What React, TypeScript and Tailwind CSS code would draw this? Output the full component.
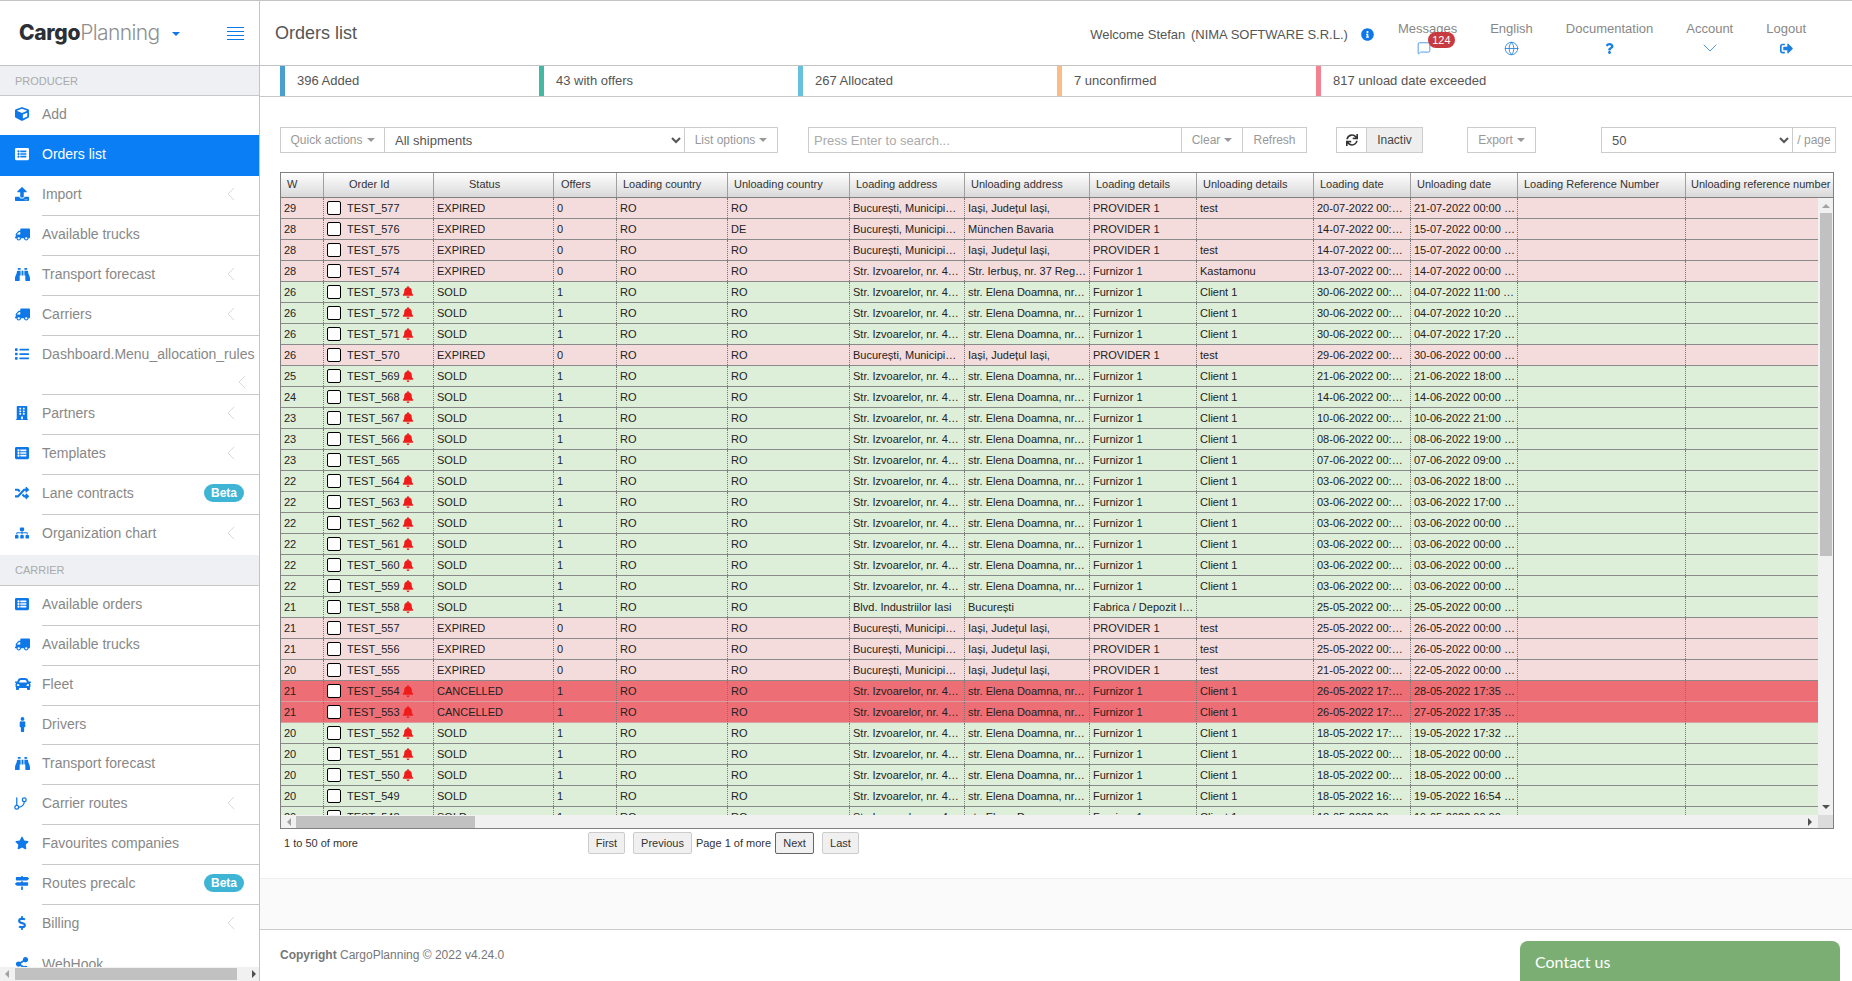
import React from 'react';
import { ChevronDown, ChevronLeft, GitBranch, Globe, MessageSquare } from 'lucide-react';
import {
    FaBell, FaBinoculars, FaBuilding, FaCar, FaCube, FaDollarSign, FaInfoCircle, FaList, FaListAlt,
    FaMale, FaMapSigns, FaQuestion, FaRandom, FaShareAlt, FaSignOutAlt, FaSitemap, FaStar, FaSync, FaTruck, FaUpload,
} from 'react-icons/fa';

const truck = <FaTruck size={15} className="-scale-x-100" />;
const binoculars = <FaBinoculars size={15} />;
const listAlt = <FaListAlt size={14} />;

type MenuItem = { label: string; icon: React.ReactNode; arrow?: boolean; beta?: boolean; active?: boolean; wrap?: boolean; noLine?: boolean; h: string };

const producer: MenuItem[] = [
    { label: 'Add', icon: <FaCube size={14} />, noLine: true, h: 'h-[39px]' },
    { label: 'Orders list', icon: listAlt, active: true, noLine: true, h: 'h-[41px]' },
    { label: 'Import', icon: <FaUpload size={14} />, arrow: true, h: 'h-[40px]' },
    { label: 'Available trucks', icon: truck, h: 'h-[40px]' },
    { label: 'Transport forecast', icon: binoculars, arrow: true, h: 'h-[40px]' },
    { label: 'Carriers', icon: truck, arrow: true, h: 'h-[40px]' },
    { label: 'Dashboard.Menu_allocation_rules', icon: <FaList size={14} />, wrap: true, h: 'h-[59px]' },
    { label: 'Partners', icon: <FaBuilding size={14} />, arrow: true, h: 'h-[40px]' },
    { label: 'Templates', icon: listAlt, arrow: true, h: 'h-[40px]' },
    { label: 'Lane contracts', icon: <FaRandom size={14} />, beta: true, h: 'h-[40px]' },
    { label: 'Organization chart', icon: <FaSitemap size={14} />, arrow: true, noLine: true, h: 'h-[40px]' },
];

const carrier: MenuItem[] = [
    { label: 'Available orders', icon: listAlt, h: 'h-[40px]' },
    { label: 'Available trucks', icon: truck, h: 'h-[40px]' },
    { label: 'Fleet', icon: <FaCar size={16} />, h: 'h-[40px]' },
    { label: 'Drivers', icon: <FaMale size={15} />, h: 'h-[39px]' },
    { label: 'Transport forecast', icon: binoculars, h: 'h-[40px]' },
    { label: 'Carrier routes', icon: <GitBranch size={15} strokeWidth={2} className="-ml-[2px]" />, arrow: true, h: 'h-[40px]' },
    { label: 'Favourites companies', icon: <FaStar size={14} />, h: 'h-[40px]' },
    { label: 'Routes precalc', icon: <FaMapSigns size={14} />, beta: true, h: 'h-[40px]' },
    { label: 'Billing', icon: <FaDollarSign size={14} />, arrow: true, noLine: true, h: 'h-[41px]' },
    { label: 'WebHook', icon: <FaShareAlt size={14} />, noLine: true, h: 'h-[40px]' },
];

const columns = [
    { title: 'W', w: 'w-[43px]', pad: 'pl-[6px]' },
    { title: 'Order Id', w: 'w-[110px]', pad: 'pl-[25px]' },
    { title: 'Status', w: 'w-[120px]', pad: 'pl-[35px]' },
    { title: 'Offers', w: 'w-[63px]', pad: 'pl-[7px]' },
    { title: 'Loading country', w: 'w-[111px]', pad: 'pl-[6px]' },
    { title: 'Unloading country', w: 'w-[122px]', pad: 'pl-[6px]' },
    { title: 'Loading address', w: 'w-[115px]', pad: 'pl-[6px]' },
    { title: 'Unloading address', w: 'w-[125px]', pad: 'pl-[6px]' },
    { title: 'Loading details', w: 'w-[107px]', pad: 'pl-[6px]' },
    { title: 'Unloading details', w: 'w-[117px]', pad: 'pl-[6px]' },
    { title: 'Loading date', w: 'w-[97px]', pad: 'pl-[6px]' },
    { title: 'Unloading date', w: 'w-[107px]', pad: 'pl-[6px]' },
    { title: 'Loading Reference Number', w: 'w-[168px]', pad: 'pl-[6px]' },
];

const BUC = 'București, Municipiul București';
const IZV = 'Str. Izvoarelor, nr. 4A Iași';
const IASI = 'Iași, Județul Iași,';
const ELENA = 'str. Elena Doamna, nr. 20, Iași';

// w, id, bell, status, unloading country, addresses, details, dates
type Row = [number, number, boolean, string, string, string, string, string, string, string, string];

const exp = (w: number, id: number, d1: string, d2: string): Row => [w, id, false, 'EXPIRED', 'RO', BUC, IASI, 'PROVIDER 1', 'test', d1, d2];
const sold = (w: number, id: number, bell: boolean, d1: string, d2: string, status = 'SOLD'): Row => [w, id, bell, status, 'RO', IZV, ELENA, 'Furnizor 1', 'Client 1', d1, d2];

const rows: Row[] = [
    exp(29, 577, '20-07-2022 00:00', '21-07-2022 00:00 - 21'),
    [28, 576, false, 'EXPIRED', 'DE', BUC, 'München Bavaria', 'PROVIDER 1', '', '14-07-2022 00:00', '15-07-2022 00:00 - 15'],
    exp(28, 575, '14-07-2022 00:00', '15-07-2022 00:00 - 15'),
    [28, 574, false, 'EXPIRED', 'RO', IZV, 'Str. Ierbuș, nr. 37 Regiunea', 'Furnizor 1', 'Kastamonu', '13-07-2022 00:00', '14-07-2022 00:00 - 14'],
    sold(26, 573, true, '30-06-2022 00:00', '04-07-2022 11:00 - 04'),
    sold(26, 572, true, '30-06-2022 00:00', '04-07-2022 10:20 - 04'),
    sold(26, 571, true, '30-06-2022 00:00', '04-07-2022 17:20 - 04'),
    exp(26, 570, '29-06-2022 00:00', '30-06-2022 00:00 - 30'),
    sold(25, 569, true, '21-06-2022 00:00', '21-06-2022 18:00 - 21'),
    sold(24, 568, true, '14-06-2022 00:00', '14-06-2022 00:00 - 14'),
    sold(23, 567, true, '10-06-2022 00:00', '10-06-2022 21:00 - 10'),
    sold(23, 566, true, '08-06-2022 00:00', '08-06-2022 19:00 - 08'),
    sold(23, 565, false, '07-06-2022 00:00', '07-06-2022 09:00 - 07'),
    sold(22, 564, true, '03-06-2022 00:00', '03-06-2022 18:00 - 03'),
    sold(22, 563, true, '03-06-2022 00:00', '03-06-2022 17:00 - 03'),
    sold(22, 562, true, '03-06-2022 00:00', '03-06-2022 00:00 - 03'),
    sold(22, 561, true, '03-06-2022 00:00', '03-06-2022 00:00 - 03'),
    sold(22, 560, true, '03-06-2022 00:00', '03-06-2022 00:00 - 03'),
    sold(22, 559, true, '03-06-2022 00:00', '03-06-2022 00:00 - 03'),
    [21, 558, true, 'SOLD', 'RO', 'Blvd. Industriilor Iasi', 'București', 'Fabrica / Depozit Iași', '', '25-05-2022 00:00', '25-05-2022 00:00 - 25'],
    exp(21, 557, '25-05-2022 00:00', '26-05-2022 00:00 - 26'),
    exp(21, 556, '25-05-2022 00:00', '26-05-2022 00:00 - 26'),
    exp(20, 555, '21-05-2022 00:00', '22-05-2022 00:00 - 22'),
    sold(21, 554, true, '26-05-2022 17:35', '28-05-2022 17:35 - 28', 'CANCELLED'),
    sold(21, 553, true, '26-05-2022 17:35', '27-05-2022 17:35 - 27', 'CANCELLED'),
    sold(20, 552, true, '18-05-2022 17:32', '19-05-2022 17:32 - 19'),
    sold(20, 551, true, '18-05-2022 00:00', '18-05-2022 00:00 - 18'),
    sold(20, 550, true, '18-05-2022 00:00', '18-05-2022 00:00 - 18'),
    sold(20, 549, false, '18-05-2022 16:54', '19-05-2022 16:54 - 19'),
    sold(20, 548, false, '18-05-2022 00:00', '19-05-2022 00:00 - 19'),
];

const rowBg: Record<string, string> = {
    EXPIRED: 'bg-[#f5dcdc] border-[#8a8a8a]',
    SOLD: 'bg-[#deefd9] border-[#8a8a8a]',
    CANCELLED: 'bg-[#ee6e75] border-[#d8a0a3]',
};

const Caret = () => <span className="inline-block ml-[4px] align-middle border-x-[4px] border-x-transparent border-t-[4px] border-t-[#999]" />;

const SideItem: React.FC<{ item: MenuItem }> = ({ item }) => (
    <div className={`${item.h} relative flex shrink-0 ${item.active ? 'bg-[#0a7ef5] text-white' : 'text-[#888]'}`}>
        <span className={`w-[42px] shrink-0 flex justify-start pl-[15px] items-center ${item.active ? 'h-[38px] text-white' : 'h-[36px] text-[#0f78e8]'}`}>{item.icon}</span>
        <div className={`flex-1 min-w-0 flex ${item.wrap ? 'flex-col' : ''} ${item.noLine ? '' : 'border-b border-[#c8c8c8]'}`}>
            <span className={`${item.active ? 'leading-[38px]' : 'leading-[36px]'} whitespace-nowrap flex-1`}>{item.label}</span>
            {item.arrow && (
                <span className="w-[36px] h-[36px] flex items-center text-[#d0d0d0]">
                    <ChevronLeft size={24} strokeWidth={0.8} className="-ml-[4px]" />
                </span>
            )}
            {item.wrap && (
                <span className="self-end pr-[5px] h-[24px] -mt-[12px] text-[#d0d0d0]">
                    <ChevronLeft size={24} strokeWidth={0.8} />
                </span>
            )}
            {item.beta && (
                <span className="mt-[9px] mr-[15px] h-[18px] w-[40px] rounded-full bg-[#3fb5d6] text-white text-[12px] font-bold leading-[18px] text-center">Beta</span>
            )}
        </div>
    </div>
);

const Sidebar = () => (
    <aside className="w-[260px] shrink-0 h-full border-r border-[#c4c4c4] flex flex-col relative overflow-hidden">
        <div className="h-[64px] shrink-0 border-b border-[#c4c4c4] flex items-center pl-[19px] box-content">
            <span className="font-['Inter',sans-serif] text-[21px] font-extrabold text-[#2c3036] tracking-[-0.3px]">Cargo</span>
            <span className="font-['Inter',sans-serif] text-[21px] font-light text-[#8f8f8f] tracking-[-0.6px]">Planning</span>
            <span className="ml-[12px] mt-[2px] border-x-[4px] border-x-transparent border-t-[4px] border-t-[#0f78e8]" />
            <span className="ml-[47px] flex flex-col gap-[3px] w-[17px]">
                <i className="block h-px bg-[#0f78e8]" />
                <i className="block h-px bg-[#0f78e8]" />
                <i className="block h-px bg-[#0f78e8]" />
                <i className="block h-px bg-[#0f78e8]" />
            </span>
        </div>
        <div className="h-[30px] shrink-0 bg-[#eef0f3] border-b border-[#c8c8c8] pl-[15px] text-[11px] leading-[31px] text-[#aaa]">PRODUCER</div>
        {producer.map((item) => <SideItem key={item.label} item={item} />)}
        <div className="h-[31px] shrink-0 bg-[#eef0f3] border-b border-[#c8c8c8] pl-[15px] text-[11px] leading-[31px] text-[#aaa]">CARRIER</div>
        {carrier.map((item, i) => <SideItem key={i} item={item} />)}
        {/* fake scrollbar over the menu */}
        <div className="absolute left-0 right-0 bottom-0 h-[14px] bg-[#f1f1f1] flex items-center">
            <span className="ml-[5px] border-y-[4px] border-y-transparent border-r-[4px] border-r-[#a3a3a3]" />
            <span className="ml-[6px] h-[12px] w-[222px] bg-[#c1c1c1]" />
            <span className="ml-[15px] border-y-[4px] border-y-transparent border-l-[4px] border-l-[#505050]" />
        </div>
    </aside>
);

const navItems = [
    { label: 'Messages', icon: <MessageSquare size={14} strokeWidth={1.3} className="text-[#1b7fe0] -ml-[8px]" /> },
    { label: 'English', icon: <Globe size={15} strokeWidth={1.3} className="text-[#1b7fe0]" /> },
    { label: 'Documentation', icon: <FaQuestion size={11} className="text-[#1b7fe0]" /> },
    { label: 'Account', icon: <ChevronDown size={24} strokeWidth={0.8} className="text-[#1b7fe0]" /> },
    { label: 'Logout', icon: <FaSignOutAlt size={13} className="text-[#1b7fe0]" /> },
];

const Header = () => (
    <header className="h-[64px] box-content shrink-0 border-b border-[#c4c4c4] flex items-center pl-[15px] pr-[46px]">
        <h1 className="text-[18px] text-[#555] font-normal">Orders list</h1>
        <span className="ml-auto text-[13px] text-[#555] whitespace-nowrap mt-[3px]">Welcome Stefan <span className="ml-[2px]">(NIMA SOFTWARE S.R.L.)</span></span>
        <FaInfoCircle size={13} className="ml-[13px] mt-[3px] text-[#0f78e8]" />
        <nav className="ml-[24px] flex gap-[33px] mt-[14px]">
            {navItems.map((n) => (
                <div key={n.label} className="relative flex flex-col items-center text-[13px] text-[#888]">
                    <span className="leading-[16px]">{n.label}</span>
                    <span className="h-[22px] flex items-center">{n.icon}</span>
                    {n.label === 'Messages' && (
                        <span className="absolute left-[30px] top-[11px] h-[16px] w-[27px] rounded-full bg-[#c73a3f] text-white text-[11px] leading-[16px] text-center">124</span>
                    )}
                </div>
            ))}
        </nav>
    </header>
);

const stats = [
    { text: '396 Added', bar: 'bg-[#4a9fd0]' },
    { text: '43 with offers', bar: 'bg-[#45b8a5]' },
    { text: '267 Allocated', bar: 'bg-[#67c1dc]' },
    { text: '7 unconfirmed', bar: 'bg-[#fbbd85]' },
    { text: '817 unload date exceeded', bar: 'bg-[#f4818f]' },
];

const StatsBar = () => (
    <div className="h-[31px] shrink-0 border-b border-[#c8c8c8] flex pl-[20px]">
        {stats.map((s) => (
            <div key={s.text} className="w-[259px] flex">
                <span className={`w-[5px] h-full ${s.bar}`} />
                <span className="pl-[12px] text-[13px] leading-[30px] text-[#555]">{s.text}</span>
            </div>
        ))}
    </div>
);

const ToolBtn: React.FC<{ w: string; children: React.ReactNode; extra?: string }> = ({ w, children, extra }) => (
    <div className={`${w} ${extra ?? ''} shrink-0 h-full border border-[#ccc] -ml-px flex items-center justify-center text-[12px] text-[#999] whitespace-nowrap`}>
        {children}
    </div>
);

const Toolbar = () => (
    <div className="h-[26px] flex">
        <div className="flex h-full ml-px">
            <ToolBtn w="w-[105px]">Quick actions<Caret /></ToolBtn>
            <select className="w-[301px] h-full -ml-px border border-[#ccc] bg-white pl-[6px] text-[13px] text-[#555] outline-none">
                <option>All shipments</option>
            </select>
            <ToolBtn w="w-[94px]">List options<Caret /></ToolBtn>
        </div>
        <div className="flex h-full ml-[30px]">
            <input placeholder="Press Enter to search..." className="w-[374px] h-full border border-[#ccc] pl-[5px] text-[13px] outline-none placeholder:text-[#aaa]" />
            <ToolBtn w="w-[62px]">Clear<Caret /></ToolBtn>
            <ToolBtn w="w-[65px]">Refresh</ToolBtn>
        </div>
        <div className="flex h-full ml-[30px]">
            <ToolBtn w="w-[31px]"><FaSync size={12} className="text-[#333]" /></ToolBtn>
            <ToolBtn w="w-[57px]" extra="bg-[#eee]"><span className="text-[#444]">Inactiv</span></ToolBtn>
        </div>
        <div className="flex h-full ml-[45px]">
            <ToolBtn w="w-[69px]">Export<Caret /></ToolBtn>
        </div>
        <div className="flex h-full ml-[65px]">
            <select className="w-[192px] h-full border border-[#ccc] bg-white pl-[6px] text-[13px] text-[#555] outline-none">
                <option>50</option>
            </select>
            <ToolBtn w="w-[44px]">/ page</ToolBtn>
        </div>
    </div>
);

const Cell: React.FC<{ w: string; children?: React.ReactNode }> = ({ w, children }) => (
    <div className={`${w} shrink-0 h-full border-r border-dotted border-[#777] pl-[3px] pr-[2px] truncate leading-[20px]`}>{children}</div>
);

const Grid = () => (
    <div className="h-[657px] border border-[#808080] flex flex-col text-[11px] font-['Liberation_Sans',Arial,sans-serif] text-[#222]">
        <div className="h-[25px] shrink-0 flex border-b border-[#808080] bg-gradient-to-b from-white to-[#d9d9d9] text-[#333]">
            {columns.map((c) => (
                <div key={c.title} className={`${c.w} ${c.pad} shrink-0 border-r border-[#a0a0a0] leading-[23px] whitespace-nowrap`}>{c.title}</div>
            ))}
            <div className="flex-1 pl-[5px] leading-[23px] whitespace-nowrap overflow-hidden">Unloading reference number</div>
        </div>
        <div className="flex-1 min-h-0 flex">
            <div className="flex-1 min-w-0 overflow-hidden">
                {rows.map((r) => (
                    <div key={r[1]} className={`h-[21px] flex border-b ${rowBg[r[3]]}`}>
                        <Cell w={columns[0].w}>{r[0]}</Cell>
                        <div className="w-[110px] shrink-0 h-full border-r border-dotted border-[#777] flex items-center pl-[3px]">
                            <span className="w-[14px] h-[14px] border-[1.5px] border-black rounded-[2px] bg-white" />
                            <span className="ml-[6px]">TEST_{r[1]}</span>
                            {r[2] && <FaBell size={12} className="ml-[2px] text-[#f01c1c]" />}
                        </div>
                        <Cell w={columns[2].w}>{r[3]}</Cell>
                        <Cell w={columns[3].w}>{r[3] === 'EXPIRED' ? 0 : 1}</Cell>
                        <Cell w={columns[4].w}>RO</Cell>
                        <Cell w={columns[5].w}>{r[4]}</Cell>
                        <Cell w={columns[6].w}>{r[5]}</Cell>
                        <Cell w={columns[7].w}>{r[6]}</Cell>
                        <Cell w={columns[8].w}>{r[7]}</Cell>
                        <Cell w={columns[9].w}>{r[8]}</Cell>
                        <Cell w={columns[10].w}>{r[9]}:00</Cell>
                        <Cell w={columns[11].w}>{r[10]}</Cell>
                        <Cell w={columns[12].w} />
                    </div>
                ))}
            </div>
            <div className="w-[15px] shrink-0 bg-[#f1f1f1] flex flex-col items-center">
                <span className="mt-[6px] border-x-[4px] border-x-transparent border-b-[4px] border-b-[#a3a3a3]" />
                <span className="mt-[5px] h-[343px] w-[12px] bg-[#c1c1c1]" />
                <span className="mt-auto mb-[6px] border-x-[4px] border-x-transparent border-t-[4px] border-t-[#505050]" />
            </div>
        </div>
        <div className="h-[13px] shrink-0 bg-[#f1f1f1] flex items-center">
            <span className="ml-[6px] border-y-[4px] border-y-transparent border-r-[4px] border-r-[#a3a3a3]" />
            <span className="ml-[5px] h-[12px] w-[179px] bg-[#c1c1c1]" />
            <span className="ml-auto mr-[6px] border-y-[4px] border-y-transparent border-l-[4px] border-l-[#505050]" />
            <span className="w-[15px] h-full bg-[#dcdcdc]" />
        </div>
    </div>
);

const PageBtn: React.FC<{ w: string; extra?: string; children: React.ReactNode }> = ({ w, extra, children }) => (
    <span className={`${w} ${extra ?? 'border-[#ccc]'} h-[22px] border rounded-[2px] bg-[#f0f0f0] flex items-center justify-center`}>{children}</span>
);

const Pagination = () => (
    <div className="mt-[3px] flex items-center text-[11px] text-[#333] h-[22px]">
        <span className="w-[308px] pl-[4px]">1 to 50 of more</span>
        <PageBtn w="w-[37px]">First</PageBtn>
        <span className="w-[8px]" />
        <PageBtn w="w-[59px]">Previous</PageBtn>
        <span className="w-[83px] text-center">Page 1 of more</span>
        <PageBtn w="w-[39px]" extra="border-[#666]">Next</PageBtn>
        <span className="w-[8px]" />
        <PageBtn w="w-[37px]">Last</PageBtn>
    </div>
);

export default function App() {
    return (
        <div className="w-[1852px] h-[981px] overflow-hidden border-t border-[#c4c4c4] flex font-['Liberation_Sans',Arial,sans-serif] text-[14px] bg-white relative">
            <Sidebar />
            <main className="flex-1 min-w-0 flex flex-col">
                <Header />
                <StatsBar />
                <div className="flex-1 min-h-0 pl-[20px] pr-[18px] pt-[30px]">
                    <Toolbar />
                    <div className="h-[19px]" />
                    <Grid />
                    <Pagination />
                </div>
                <div className="h-[52px] shrink-0 bg-[#fafafa] border-y border-t-[#eee] border-b-[#ccc]" />
                <footer className="h-[51px] shrink-0 pl-[20px] pt-[16px] text-[12px] text-[#777]">
                    <b>Copyright</b> CargoPlanning © 2022 v4.24.0
                </footer>
            </main>
            <div className="absolute right-[12px] bottom-0 w-[320px] h-[40px] bg-[#7aae72] rounded-t-[8px] pl-[15px] pt-[9px] text-white text-[16px] font-['Lato',sans-serif]">Contact us</div>
        </div>
    );
}
